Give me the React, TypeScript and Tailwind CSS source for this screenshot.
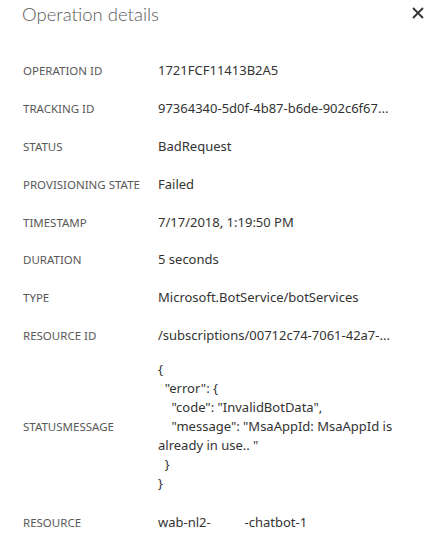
import React from "react";

const rows: { label: string; value: string }[] = [
  { label: "OPERATION ID", value: "1721FCF11413B2A5" },
  { label: "TRACKING ID", value: "97364340-5d0f-4b87-b6de-902c6f67..." },
  { label: "STATUS", value: "BadRequest" },
  { label: "PROVISIONING STATE", value: "Failed" },
  { label: "TIMESTAMP", value: "7/17/2018, 1:19:50 PM" },
  { label: "DURATION", value: "5 seconds" },
  { label: "TYPE", value: "Microsoft.BotService/botServices" },
  { label: "RESOURCE ID", value: "/subscriptions/00712c74-7061-42a7-..." },
];

const statusMessage = `{
  "error": {
    "code": "InvalidBotData",
    "message": "MsaAppId: MsaAppId is already in use.. "
  }
}`;

function Row({ label, children }: { label: string; children: React.ReactNode }) {
  return (
    <div className="flex items-center py-[9.4px]">
      <div className="w-[135px] shrink-0 text-[11.5px] leading-[19px] text-[#595959]">{label}</div>
      <div className="w-[245px] text-[13px] leading-[19px] text-[#333]">{children}</div>
    </div>
  );
}

export default function App() {
  return (
    <div
      className="h-[535px] w-[448px] overflow-hidden bg-white"
      style={{ fontFamily: '"Noto Sans", "Open Sans", sans-serif' }}
    >
      <div className="flex h-[33px] items-start justify-between pl-[22px] pr-[24px]">
        <h1
          className="pt-[1px] text-[18.5px] font-light leading-[26px] text-[#595959]"
          style={{ fontFamily: 'Lato, "Noto Sans", sans-serif' }}
        >
          Operation details
        </h1>
        <button className="mt-[7px] text-[#333]" aria-label="Close">
          <svg width="12" height="12" viewBox="0 0 12 12" fill="none" stroke="currentColor" strokeWidth="1.8">
            <path d="M1 1 L11 11 M11 1 L1 11" />
          </svg>
        </button>
      </div>

      <div className="mt-[19px] px-[23px]">
        {rows.map((r) => (
          <Row key={r.label} label={r.label}>
            {r.value}
          </Row>
        ))}
        <div className="-mt-[4px]">
          <Row label="STATUSMESSAGE">
            <div className="whitespace-pre-wrap">{statusMessage}</div>
          </Row>
        </div>
        <div className="mt-[2px]">
          <Row label="RESOURCE">
            <span className="whitespace-pre">wab-nl2-          -chatbot-1</span>
          </Row>
        </div>
      </div>
    </div>
  );
}
